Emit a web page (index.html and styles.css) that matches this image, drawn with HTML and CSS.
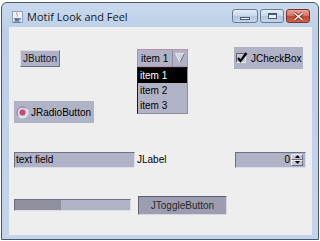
FILE: index.html
```html
<!DOCTYPE html>
<html lang="en">
<head>
  <meta charset="UTF-8" />
  <title>Motif Look and Feel</title>
  <link rel="stylesheet" href="styles.css">
</head>
<body>

  <div class="window">
    <div class="titlebar">
      <svg class="app-icon" width="11" height="12" viewBox="0 0 11 12">
        <rect x="0.5" y="0.5" width="10" height="11" fill="#eef3f9" stroke="#8ea3bd"/>
        <path d="M5 1.5 C3.5 3 6.5 4 5 5.5" stroke="#e07830" fill="none"/>
        <path d="M2 7 L8 7 L7 10 L3 10 Z" fill="#5876a6"/>
        <path d="M8 7.5 Q9.8 8 8 9" stroke="#5876a6" fill="none"/>
        <rect x="1.5" y="10.5" width="7" height="1" fill="#3f5a88"/>
      </svg>
      <span class="title">Motif Look and Feel</span>
      <div class="caption-btns">
        <span class="cap cap-min"><i></i></span>
        <span class="cap cap-max"><i></i></span>
        <span class="cap cap-close">
          <svg width="11" height="9" viewBox="0 0 11 9">
            <path d="M1.5 1 L9.5 8 M9.5 1 L1.5 8" stroke="#6a2418" stroke-width="3"/>
            <path d="M1.5 1 L9.5 8 M9.5 1 L1.5 8" stroke="#ffffff" stroke-width="1.6"/>
          </svg>
        </span>
      </div>
    </div>

    <div class="client">
      <div class="grid">
        <div class="cell">
          <div class="motif-btn raised">JButton</div>
        </div>
        <div class="cell">
          <div class="combo">
            <span class="combo-text">item 1</span>
            <span class="combo-arrow">
              <svg width="10" height="10" viewBox="0 0 10 10">
                <polygon points="0.5,0.5 9.5,0.5 5,9.5" fill="#cfd0dc"/>
                <path d="M0.5 0.5 L9.5 0.5" stroke="#e4e4ec"/>
                <path d="M0.5 0.5 L5 9.5" stroke="#e8e8f0"/>
                <path d="M9.5 0.5 L5 9.5" stroke="#70727f"/>
              </svg>
            </span>
            <div class="combo-list">
              <div class="combo-item selected">item 1</div>
              <div class="combo-item">item 2</div>
              <div class="combo-item">item 3</div>
            </div>
          </div>
        </div>
        <div class="cell">
          <div class="check raised-flat">
            <svg class="check-icon" width="12" height="12" viewBox="0 0 12 12">
              <rect x="0.5" y="1.5" width="9" height="9" fill="#c4c5d4"/>
              <path d="M0.5 10.5 L0.5 1.5 L9.5 1.5" stroke="#5c5e6c" fill="none"/>
              <path d="M9.5 1.5 L9.5 10.5 L0.5 10.5" stroke="#e6e6ee" fill="none"/>
              <path d="M2 6 L4.5 9 L10.5 1" stroke="#000" stroke-width="2.2" fill="none"/>
            </svg>
            <span>JCheckBox</span>
          </div>
        </div>

        <div class="cell">
          <div class="radio">
            <svg class="radio-icon" width="13" height="13" viewBox="0 0 13 13">
              <circle cx="6.5" cy="6.5" r="5.5" fill="#d9d9e2"/>
              <path d="M2.6 10.4 A5.5 5.5 0 0 1 10.4 2.6" stroke="#7a7c8a" fill="none"/>
              <path d="M10.4 2.6 A5.5 5.5 0 0 1 2.6 10.4" stroke="#f2f2f6" fill="none"/>
              <circle cx="6.5" cy="6.5" r="3" fill="#c8467a"/>
            </svg>
            <span>JRadioButton</span>
          </div>
        </div>
        <div class="cell"></div>
        <div class="cell"></div>

        <div class="cell">
          <div class="text-field sunken">text field</div>
        </div>
        <div class="cell">
          <span class="label">JLabel</span>
        </div>
        <div class="cell">
          <div class="spinner sunken">
            <span class="spinner-value">0</span>
            <span class="spinner-btns">
              <span class="spin-btn">
                <svg width="5" height="3" viewBox="0 0 5 3"><polygon points="2.5,0 5,3 0,3" fill="#000"/></svg>
              </span>
              <span class="spin-btn">
                <svg width="5" height="3" viewBox="0 0 5 3"><polygon points="0,0 5,0 2.5,3" fill="#000"/></svg>
              </span>
            </span>
          </div>
        </div>

        <div class="cell">
          <div class="progress sunken">
            <div class="progress-fill" style="width: 40%"></div>
          </div>
        </div>
        <div class="cell">
          <div class="toggle">JToggleButton</div>
        </div>
        <div class="cell"></div>
      </div>
    </div>
  </div>

</body>
</html>
```

FILE: styles.css
```css
* {
  box-sizing: border-box;
  margin: 0;
  padding: 0;
}
html, body {
  width: 320px;
  height: 241px;
  overflow: hidden;
  background: #ffffff;
  font-family: "Liberation Sans", Arial, sans-serif;
  font-size: 10px;
  color: #000;
}

/* window frame */
.window {
  margin: 2px 0 0 1px;
  width: 318px;
  height: 238px;
  border: 1px solid #4a5566;
  border-radius: 6px 6px 0 0;
  background: linear-gradient(180deg, #c9daee 0%, #bccfe7 12%, #c3d5ea 100%);
  display: flex;
  flex-direction: column;
}
.titlebar {
  height: 24px;
  display: flex;
  align-items: flex-start;
  padding-left: 10px;
}
.app-icon {
  margin-top: 8px;
  flex-shrink: 0;
}
.title {
  margin-left: 4px;
  margin-top: 6px;
  font-family: "Open Sans", "Liberation Sans", sans-serif;
  font-size: 11px;
  color: #1a1a1a;
}
.caption-btns {
  margin-left: auto;
  margin-right: 8px;
  margin-top: 6px;
  display: flex;
  gap: 2px;
}
.cap {
  height: 14px;
  width: 24px;
  border: 1px solid #6a7c94;
  border-radius: 3px;
  background: linear-gradient(180deg, #e4edf7 0%, #c7d6ea 50%, #b3c6df 51%, #c4d5ea 100%);
  display: flex;
  align-items: center;
  justify-content: center;
}
.cap-min {
  width: 26px;
}
.cap-min i {
  display: block;
  width: 10px;
  height: 3px;
  margin-top: 4px;
  background: #fff;
  border: 1px solid #4a5a70;
}
.cap-max i {
  display: block;
  width: 9px;
  height: 6px;
  border: 1px solid #4a5a70;
  border-top-width: 2px;
  background: #e8eef6;
}
.cap-close {
  border-color: #7a3325;
  background: linear-gradient(180deg, #e8a495 0%, #d6705c 50%, #c4452f 51%, #d0644c 100%);
}

/* client area */
.client {
  margin: 0 6px 0 7px;
  height: 208px;
  background: #eeeeee;
}
.grid {
  display: grid;
  grid-template-columns: 123px 97px 1fr;
  grid-template-rows: 62px 46px 49px 42px;
  padding-left: 5px;
  align-items: center;
}
.cell {
  display: flex;
  align-items: center;
}

.raised {
  border-top: 1px solid #dcdde6;
  border-left: 1px solid #dcdde6;
  border-bottom: 1px solid #6f7182;
  border-right: 1px solid #6f7182;
}
.sunken {
  border-top: 1px solid #6f7182;
  border-left: 1px solid #6f7182;
  border-bottom: 1px solid #dcdde6;
  border-right: 1px solid #dcdde6;
}

.motif-btn {
  margin-left: 6px;
  width: 40px;
  height: 17px;
  background: #b0b2c5;
  display: flex;
  align-items: center;
  justify-content: center;
  color: #1a1a1a;
}

/* combo box with open popup */
.combo {
  position: relative;
  width: 51px;
  height: 18px;
  border: 1px solid #bf8cae;
  background: #b0b2c5;
  display: flex;
  align-items: center;
}
.combo-text {
  flex: 1;
  padding-left: 3px;
}
.combo-arrow {
  width: 15px;
  height: 100%;
  border-left: 1px solid #8a8c9c;
  display: flex;
  align-items: center;
  justify-content: center;
}
.combo-list {
  position: absolute;
  left: -1px;
  top: calc(100% + 1px);
  width: 51px;
  background: #b0b2c5;
  border-top: 1px solid #1a1a1a;
  border-left: 1px solid #1a1a1a;
  border-right: 1px solid #8e909e;
  border-bottom: 1px solid #8e909e;
  z-index: 10;
}
.combo-item {
  height: 15px;
  line-height: 15px;
  padding-left: 2px;
  font-size: 10px;
}
.combo-item.selected {
  background: #000;
  color: #fff;
}

.check {
  width: 69px;
  height: 22px;
  background: #b0b2c5;
  display: flex;
  align-items: center;
  padding-left: 2px;
}
.check-icon {
  margin-right: 3px;
}

.radio {
  width: 80px;
  height: 22px;
  background: #b0b2c5;
  display: flex;
  align-items: center;
  padding-left: 2px;
}
.radio-icon {
  margin-right: 2px;
}

.text-field {
  width: 121px;
  height: 16px;
  background: #b0b2c5;
  padding-left: 1px;
  line-height: 14px;
}
.label {
  color: #000;
}

.spinner {
  margin-left: 1px;
  width: 71px;
  height: 16px;
  background: #b0b2c5;
  display: flex;
  align-items: center;
  justify-content: flex-end;
  padding-right: 2px;
}
.spinner-value {
  margin-right: 1px;
}
.spinner-btns {
  display: flex;
  flex-direction: column;
  width: 12px;
  height: 12px;
}
.spin-btn {
  flex: 1;
  display: flex;
  align-items: center;
  justify-content: center;
  background: #c6c7d4;
  border-top: 1px solid #eeeef4;
  border-left: 1px solid #eeeef4;
  border-bottom: 1px solid #6f7182;
  border-right: 1px solid #6f7182;
}

.progress {
  width: 117px;
  height: 12px;
  background: #b0b2c5;
}
.progress-fill {
  height: 100%;
  background: #8f909f;
}

.toggle {
  margin-left: 1px;
  width: 89px;
  height: 19px;
  background: #9c9db0;
  border-top: 1px solid #5f6070;
  border-left: 1px solid #5f6070;
  border-bottom: 1px solid #d6d7e0;
  border-right: 1px solid #d6d7e0;
  display: flex;
  align-items: center;
  justify-content: center;
  color: #2a2a2a;
}
```
